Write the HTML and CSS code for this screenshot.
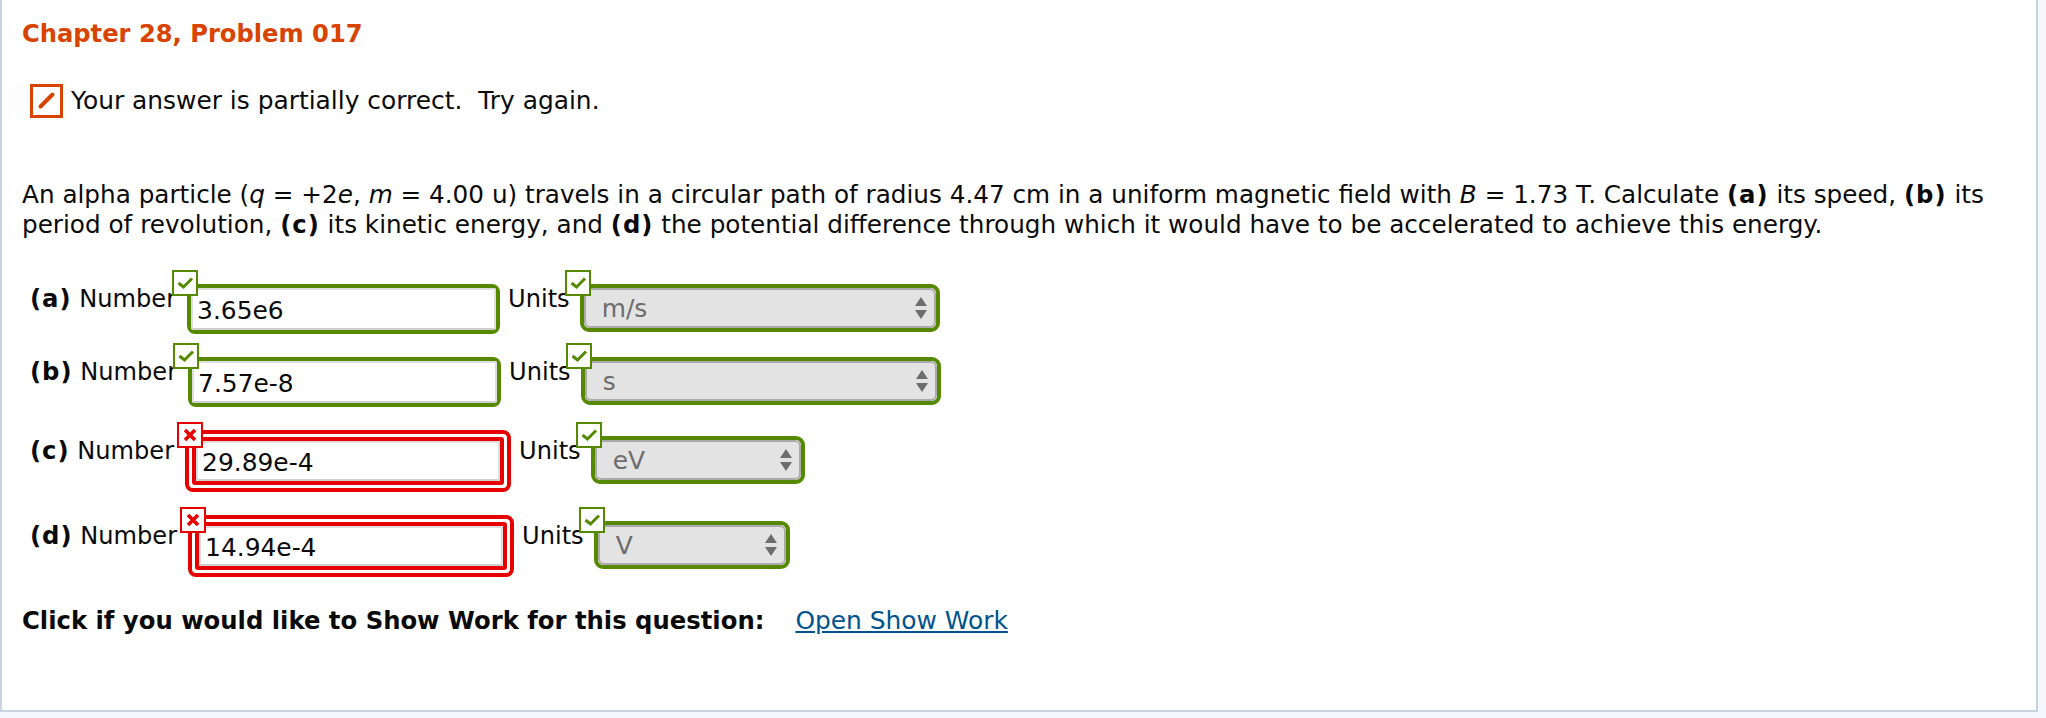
FILE: index.html
```html
<!DOCTYPE html>
<html lang="en">
<head>
<meta charset="utf-8">
<title>Chapter 28, Problem 017</title>
<link rel="stylesheet" href="styles.css">
</head>
<body>
<main class="panel">
  <h1 class="title">Chapter 28, Problem 017</h1>
  <div class="status">
    <span class="status-icon"><svg viewBox="0 0 33 34" width="33" height="34"><path d="M10.500 22.500 L22.500 10.500" stroke="#d84400" stroke-width="4" stroke-linecap="round" fill="none"/></svg></span>
    <span>Your answer is partially correct.&nbsp; Try again.</span>
  </div>
  <p class="problem">An alpha particle (<i>q</i> = +2<i>e</i>, <i>m</i> = 4.00 u) travels in a circular path of radius 4.47 cm in a uniform magnetic field with <i>B</i> = 1.73 T. Calculate <b>(a)</b> its speed, <b>(b)</b> its period of revolution, <b>(c)</b> its kinetic energy, and <b>(d)</b> the potential difference through which it would have to be accelerated to achieve this energy.</p>

  <div class="rows">
    <div class="row">
      <span class="label"><b>(a)</b> Number</span>
      <span class="field ok">
        <span class="badge ok"><svg viewBox="0 0 22 22"><path d="M4.500 11 L9.500 15 L18 6.500" class="tick"/></svg></span>
        <input class="answer" type="text" value="3.65e6" readonly>
      </span>
      <span class="label units">Units</span>
      <span class="pick ok w-lg">
        <span class="badge ok"><svg viewBox="0 0 22 22"><path d="M4.500 11 L9.500 15 L18 6.500" class="tick"/></svg></span>
        <select class="unit" disabled><option>m/s</option></select>
        <svg class="arrows" viewBox="0 0 12 22" width="12" height="22"><path d="M6 0 L12 9 H0 Z M0 13 H12 L6 22 Z"/></svg>
      </span>
    </div>
    <div class="row">
      <span class="label"><b>(b)</b> Number</span>
      <span class="field ok">
        <span class="badge ok"><svg viewBox="0 0 22 22"><path d="M4.500 11 L9.500 15 L18 6.500" class="tick"/></svg></span>
        <input class="answer" type="text" value="7.57e-8" readonly>
      </span>
      <span class="label units">Units</span>
      <span class="pick ok w-lg">
        <span class="badge ok"><svg viewBox="0 0 22 22"><path d="M4.500 11 L9.500 15 L18 6.500" class="tick"/></svg></span>
        <select class="unit" disabled><option>s</option></select>
        <svg class="arrows" viewBox="0 0 12 22" width="12" height="22"><path d="M6 0 L12 9 H0 Z M0 13 H12 L6 22 Z"/></svg>
      </span>
    </div>
    <div class="row wrong">
      <span class="label"><b>(c)</b> Number</span>
      <span class="field bad">
        <span class="badge bad"><svg viewBox="0 0 22 22"><path d="M6 6 L16 16 M16 6 L6 16" class="cross"/></svg></span>
        <span class="field-inner"><input class="answer" type="text" value="29.89e-4" readonly></span>
      </span>
      <span class="label units">Units</span>
      <span class="pick ok w-md">
        <span class="badge ok"><svg viewBox="0 0 22 22"><path d="M4.500 11 L9.500 15 L18 6.500" class="tick"/></svg></span>
        <select class="unit" disabled><option>eV</option></select>
        <svg class="arrows" viewBox="0 0 12 22" width="12" height="22"><path d="M6 0 L12 9 H0 Z M0 13 H12 L6 22 Z"/></svg>
      </span>
    </div>
    <div class="row wrong">
      <span class="label"><b>(d)</b> Number</span>
      <span class="field bad">
        <span class="badge bad"><svg viewBox="0 0 22 22"><path d="M6 6 L16 16 M16 6 L6 16" class="cross"/></svg></span>
        <span class="field-inner"><input class="answer" type="text" value="14.94e-4" readonly></span>
      </span>
      <span class="label units">Units</span>
      <span class="pick ok w-sm">
        <span class="badge ok"><svg viewBox="0 0 22 22"><path d="M4.500 11 L9.500 15 L18 6.500" class="tick"/></svg></span>
        <select class="unit" disabled><option>V</option></select>
        <svg class="arrows" viewBox="0 0 12 22" width="12" height="22"><path d="M6 0 L12 9 H0 Z M0 13 H12 L6 22 Z"/></svg>
      </span>
    </div>
  </div>

  <p class="work"><b>Click if you would like to Show Work for this question:</b><a class="work-link" href="#">Open Show Work</a></p>
</main>
</body>
</html>
```
FILE: styles.css
```css
* { box-sizing: border-box; }
html, body { margin: 0; height: 718px; overflow: hidden; }
body { background: #f4f8fc; font-family: "DejaVu Sans", Verdana, sans-serif; font-size: 24.9px; line-height: 30px; color: #0a0a0a; }
b { font-size: 24.3px; }
.panel { width: 2038px; height: 712px; background: #fff; border: 2px solid #c8d3e2; border-top: 0; padding: 18px 36px 0 20px; }
.title { margin: 0; font-size: 24.2px; line-height: 32px; font-weight: bold; color: #d84400; }
.status { display: flex; align-items: center; margin: 34px 0 0 8px; height: 34px; gap: 8px; }
.status-icon { display: block; width: 33px; height: 34px; border: 3px solid #d84400; flex: none; }
.status-icon svg { display: block; margin: -3px; }
.problem { margin: 62px 0 0; font-size: 24.7px; }
.problem b, .label b { letter-spacing: 1px; }
.rows { display: flex; flex-direction: column; gap: 23px; margin: 44px 0 0 8px; }
.row { display: flex; align-items: flex-start; }
.wrong .label, .wrong .pick { margin-top: 6px; }
.label { white-space: nowrap; flex: none; font-size: 24.1px; }
.units { margin-left: 8px; }
.field { position: relative; display: block; flex: none; margin-left: 11px; border-radius: 8px; }
.field.ok { width: 313px; height: 50px; border: 4px solid #558a00; }
.field.bad { width: 326px; height: 62px; border: 4px solid #e60000; padding: 3px; }
.field-inner { display: block; height: 48px; border: 4px solid #e60000; border-radius: 3px; }
.answer { display: block; width: 100%; height: 100%; border: 2px solid #dedede; border-bottom-color: #cfcfcf; background: #fff; color: #0a0a0a; font: 24.9px/30px "DejaVu Sans", Verdana, sans-serif; padding: 2px 0 0 4px; outline: 0; border-radius: 2px; }
.pick { position: relative; display: block; flex: none; margin-left: 10px; height: 48px; border: 4px solid #558a00; border-radius: 9px; }
.w-lg { width: 360px; }
.w-md { width: 214px; }
.w-sm { width: 196px; }
.unit { display: block; width: 100%; height: 100%; appearance: none; -webkit-appearance: none; background: #e3e3e3; border: 2px solid #aaa; border-radius: 6px; color: #6d6d6d; font: 24.9px "DejaVu Sans", Verdana, sans-serif; padding: 0 0 0 16px; opacity: 1; }
.arrows { position: absolute; right: 9px; top: 9px; fill: #6d6d6d; }
.badge { position: absolute; width: 26px; height: 26px; background: #fff; display: block; z-index: 1; }
.badge svg { display: block; width: 22px; height: 22px; }
.badge.ok { left: -19px; top: -18px; border: 2px solid #558a00; }
.badge.bad { left: -12px; top: -12px; border: 2px solid #e60000; }
.tick { fill: none; stroke: #558a00; stroke-width: 3; }
.cross { fill: none; stroke: #e60000; stroke-width: 3.6; }
.work { margin: 29px 0 0; display: flex; }
.work-link { margin-left: 31px; color: #00538c; }
```
